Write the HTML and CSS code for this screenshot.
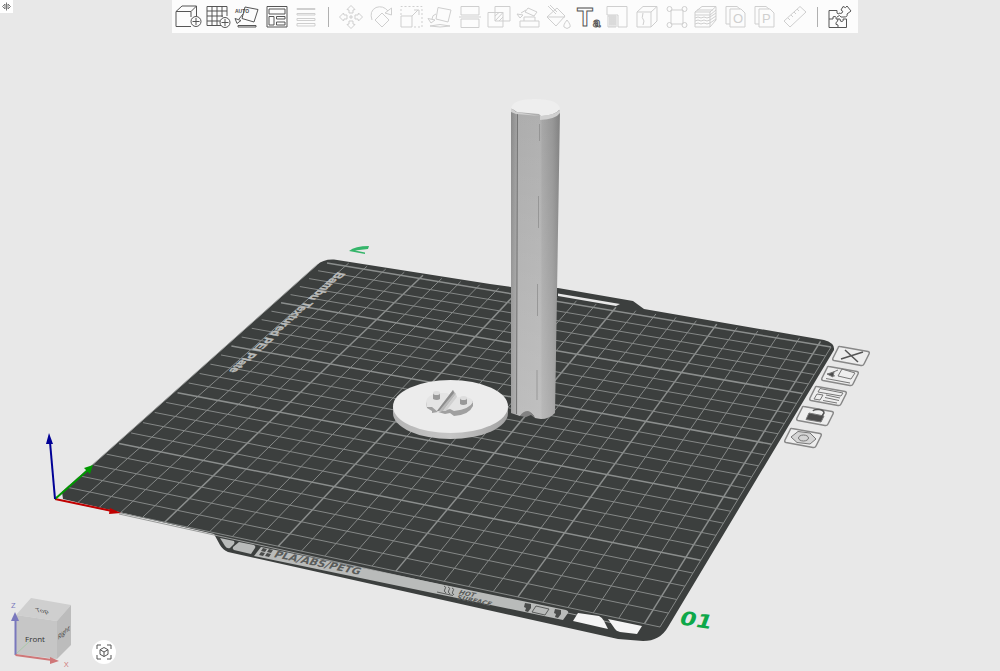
FILE: index.html
```html
<!doctype html>
<html lang="en">
<head>
<meta charset="utf-8">
<title>Prepare - Plate 01</title>
<link rel="stylesheet" href="styles.css">
</head>
<body>

<main class="stage">
	<svg class="scene" viewBox="0 0 1000 671">
		<defs>
			<linearGradient id="towerSide" x1="0" x2="1" y1="0" y2="0">
				<stop offset="0" stop-color="#8a8a8a"/>
				<stop offset="0.1" stop-color="#9c9c9c"/>
				<stop offset="0.15" stop-color="#adadad"/>
				<stop offset="0.6" stop-color="#b0b0b0"/>
				<stop offset="0.64" stop-color="#a6a6a6"/>
				<stop offset="0.85" stop-color="#969696"/>
				<stop offset="1" stop-color="#808080"/>
			</linearGradient>
			<linearGradient id="towerLight" x1="0" x2="0" y1="0" y2="1">
				<stop offset="0" stop-color="#fff" stop-opacity="0"/>
				<stop offset="1" stop-color="#fff" stop-opacity="0.2"/>
			</linearGradient>
			<linearGradient id="discSide" x1="0" x2="1" y1="0" y2="0">
				<stop offset="0" stop-color="#b5b5b5"/>
				<stop offset="0.5" stop-color="#c6c6c6"/>
				<stop offset="1" stop-color="#a2a2a2"/>
			</linearGradient>
		</defs>

		<!-- build plate -->
		<path class="plate" d="M63 499L62 492L317 265Q323 259 334 259.500L490 284L511 287L558 288L633 301L644 309L824 340Q835 343 834 350L668 627Q660 641 643 641L618 639L228 552Q223 550 220 545L214 534Z"/>
		<path class="slot" d="M558 293.500L620 304L616 306L558 296Z"/>
		<g id="grid"></g>
		<path class="rim" d="M62 492L318 264"/>
		<path class="rim" d="M119 514L640 629"/>

		<!-- front lip -->
		<path class="label" d="M220 538L234 541Q235 542 234 544L230 548Q227 549 225 546Z"/>
		<path class="label" d="M239 542L254 545Q256 546 255 548L251 554L234 550Q232 549 233 547Z"/>
		<path class="label" d="M261 547L566 610Q569 611 568 613L563 620L254 556Z"/>
		<path class="hole" d="M578 613L599 616Q603 618 604 621L608 629L573 621Z"/>
		<path class="hole" d="M608 619L642 626L637 634L620 632Q616 631 615 629Z"/>
		<path class="ink" d="M263 548l4 1-2 3-4-1zM269 549l4 1-2 3-4-1zM261 552l4 1-2 3-4-1zM267 553l4 1-2 3-4-1z"/>
		<text class="lip-text" transform="matrix(0.97 0.2 -0.5 0.8 273 557)">PLA/ABS/PETG</text>
		<path class="ink-line" d="M444 586q3 1 1 3t1 4M448 587q3 1 1 3t1 4M452 588q3 1 1 3t1 4M437 592l16 3.500"/>
		<text class="lip-small" transform="matrix(0.97 0.2 -0.5 0.8 458 594)">HOT</text>
		<text class="lip-small" transform="matrix(0.97 0.2 -0.5 0.8 456 599)">SURFACE</text>
		<path class="ink" d="M525 603l6 1 0 4-3 4-3-1 1-3-2-1zM555 609l6 1 0 4-3 4-3-1 1-3-2-1z"/>
		<path class="ink-line" d="M536 606l13 3-4 6-13-3z"/>

		<text class="plate-name" transform="matrix(-0.74 0.67 -0.97 -0.2 338 272)">Bambu Textured PEI Plate</text>
		<path class="green-mark" d="M349 251L365 254L365 252.500L355 250.500L368 249L369 246Q355 246 349 251Z"/>
		<text class="plate-number" transform="matrix(1 0.16 -0.3 0.8 678 624)">01</text>

		<!-- base disc -->
		<path fill="url(#discSide)" d="M393 406.500V413A57.500 26 0 0 0 508 413V406.500Z"/>
		<ellipse cx="450.500" cy="406.500" rx="57.500" ry="26.500" fill="#ececec"/>
		<path fill="#a0a0a0" d="M426 402L427 408L432 411V413L438 412L445 414L450 413L454 416Q469 415 473 406V401Z"/>
		<path fill="#e4e4e4" d="M426 402Q427 394 441 393L447 393L453 398Q472 395 473 402Q470 409 454 411L450 409L438 412L432 407L427 407Z"/>
		<path fill="#b9b9b9" d="M453 390L456 394L443 411L437 411Z"/>
		<path fill="#8d8d8d" d="M453 390L454 393L439 411L437 411Z"/>
		<path fill="#d0d0d0" d="M456 394L457 397L446 411H443Z"/>
		<path fill="#999" d="M433 393V399Q437 401 440 399V393ZM460 398V404Q463 406 467 404V398Z"/>
		<ellipse cx="436.500" cy="393" rx="3.500" ry="2" fill="#ddd"/>
		<ellipse cx="463.500" cy="398" rx="3.500" ry="2" fill="#ddd"/>

		<!-- tower -->
		<path id="tower" fill="url(#towerSide)" d="M511 109L560 110L555 413Q549 419 541 419L535 418Q532 411 526 412L520 416L511 413Z"/>
		<path fill="url(#towerLight)" d="M511 109L560 110L555 413Q549 419 541 419L535 418Q532 411 526 412L520 416L511 413Z"/>
		<path fill="none" stroke="#747474" d="M517.500 113L516.500 414"/>
		<path fill="none" stroke="#898989" stroke-width="0.700" d="M539.500 124V141M538.500 196V228M537.500 284V316M537 370V400"/>
		<path fill="#d0d0d0" d="M511 108L516 112L540 116Q557 115 560 109V113Q556 119 540 120V116L516 114L511 112Z"/>
		<path fill="#eee" d="M511 108Q513 99 535 99Q559 99 560 109Q556 115 541 116L539 114L517 112Z"/>
		<path fill="#828282" d="M520 416Q523 411 528 411Q532 412 535 418L531 415L526 417Z"/>

		<!-- origin axes -->
		<path stroke="#c00000" stroke-width="2" d="M55 499L112 511"/>
		<path fill="#c00000" d="M110 508L121 513L109 514Z"/>
		<path stroke="#009800" stroke-width="2" d="M55 499L88 470"/>
		<path fill="#009800" d="M84 468L93 465L90 474Z"/>
		<path stroke="#000096" stroke-width="2" d="M55 499L50 442"/>
		<path fill="#000096" d="M49 433L53 444H46Z"/>

		<!-- view cube -->
		<path fill="#cfcfcf" d="M31 598L71 605L57 621L16 615Z"/>
		<path fill="#c6c6c6" d="M16 615L57 621L57 659L15 654Z"/>
		<path fill="#bcbcbc" d="M71 605V645L57 659V621Z"/>
		<path stroke="#a9c9a9" stroke-width="1" d="M16 654L31 640"/>
		<text class="cube-text" x="25" y="642">Front</text>
		<text class="cube-small" transform="matrix(0.98 0.12 0.4 0.8 37 612)">Top</text>
		<text class="cube-small" transform="matrix(0.7 -0.6 0 1 58 640)">Right</text>
		<path stroke="#7a78bd" stroke-width="2" d="M15.500 655V620"/>
		<path fill="#7a78bd" d="M15 612L19 621H11Z"/>
		<path stroke="#cf7778" stroke-width="2" d="M15.500 655L52 660"/>
		<path fill="#cf7778" d="M50 657L59 661L50 664Z"/>
		<text class="axis-z" x="11" y="608">Z</text>
		<text class="axis-x" x="64" y="667">X</text>
	</svg>

	<!-- plate actions -->
	<button class="plate-btn remove" aria-label="Remove plate">
		<svg viewBox="0 0 40 22"><path d="M9 1.500L37 6.500Q39 7 38 9L33 19Q32 21 30 20.500L3 15.500Q1 15 2 13L7 3Q7.500 1 9 1.500Z"/><path class="thick" d="M14 5L27 17M32 7L10 14"/></svg>
	</button>
	<button class="plate-btn orient" aria-label="Auto orient plate">
		<svg viewBox="0 0 40 22"><path d="M9 1.500L37 6.500Q39 7 38 9L33 19Q32 21 30 20.500L3 15.500Q1 15 2 13L7 3Q7.500 1 9 1.500Z"/><path d="M22 4L35 8L31 14L18 11ZM6 13.500L30 18M11 8L18 5M8 9L15 11"/><path class="solid" d="M7 9L14 7L13 12Z"/></svg>
	</button>
	<button class="plate-btn arrange" aria-label="Arrange plate">
		<svg viewBox="0 0 40 22"><path d="M9 1.500L37 6.500Q39 7 38 9L33 19Q32 21 30 20.500L3 15.500Q1 15 2 13L7 3Q7.500 1 9 1.500Z"/><path d="M12 3.500L35 8L33 11L10 7ZM9 9L15 10L12 15L6 14ZM18 10L32 13M17 12.500L31 15.500M15 15.500L29 18"/></svg>
	</button>
	<button class="plate-btn lock" aria-label="Lock plate">
		<svg viewBox="0 0 40 22"><path d="M9 1.500L37 6.500Q39 7 38 9L33 19Q32 21 30 20.500L3 15.500Q1 15 2 13L7 3Q7.500 1 9 1.500Z"/><path class="solid" d="M14 8L29 11L26 17L11 14.500Z"/><path class="thick" d="M27 11L29 8Q29 5 24 4.500Q19 4 18 6"/></svg>
	</button>
	<button class="plate-btn settings" aria-label="Plate settings">
		<svg viewBox="0 0 40 22"><path d="M9 1.500L37 6.500Q39 7 38 9L33 19Q32 21 30 20.500L3 15.500Q1 15 2 13L7 3Q7.500 1 9 1.500Z"/><path class="nut" d="M15 4.500L27 6L33 12L27 17L14 15.500L8 10Z"/><ellipse cx="20.500" cy="11" rx="5" ry="3"/></svg>
	</button>

	<button class="fit-btn" aria-label="Fit camera to scene">
		<svg viewBox="0 0 24 24"><path d="M5 9V5H9M15 5H19V9M19 15V19H15M9 19H5V15M12 7.500L16 9.700V14.300L12 16.500L8 14.300V9.700ZM8 9.700L12 12L16 9.700M12 12V16.500"/></svg>
	</button>
</main>

<button class="collapse-btn" aria-label="Collapse sidebar">
	<svg viewBox="0 0 13 13"><path d="M6.500 2.500V10.500M5 4L2.500 6.500L5 9ZM8 4L10.500 6.500L8 9Z"/></svg>
</button>

<header class="topbar">
	<nav class="toolbar" aria-label="Tools">
		<button aria-label="Add"><svg viewBox="0 0 24 24"><path d="M15 21.500H0V6.500H15V12M0 6.500L6 1H20.500L15 6.500M20.500 1V11"/><circle cx="20" cy="16.500" r="5"/><path d="M16.500 16.500H23.500M20 13V20"/></svg></button>
		<button aria-label="Add plate"><svg viewBox="0 0 24 24"><path d="M15 20.500H1V1.500H21V11M1 6H21M1 11H17M1 16H14M6 1.500V20.500M11 1.500V20.500M16 1.500V12"/><circle cx="19" cy="17.500" r="5"/><path d="M15.500 17.500H22.500M19 14V21"/></svg></button>
		<button aria-label="Auto orient"><svg viewBox="0 0 24 24"><path d="M10 2L23 4.500L19 17L7 13.500ZM3 20.500H21V22H3ZM0 13.500L6 15.500L2 18.500ZM4 14L8 9"/><text class="auto-text" x="0" y="8">AUTO</text></svg></button>
		<button aria-label="Arrange all"><svg viewBox="0 0 24 24"><path d="M2 1.500H22V22H2ZM4 4H20V9H4ZM4 11.500H9V20H4ZM11.500 11.500H20V14H11.500ZM11.500 17H20V20H11.500Z"/></svg></button>
		<button class="off" disabled aria-label="Layers height"><svg viewBox="0 0 24 24"><path d="M3 3.500H21V4.500H3ZM3 8.500H21V10H3ZM3 13.500H21V15.500H3ZM3 18.500H21V21H3Z"/></svg></button>
		<span class="sep"></span>
		<button class="off" disabled aria-label="Move"><svg viewBox="0 0 24 24"><path d="M12 0.500L16 4.500L14 5V8H10V5L8 4.500ZM12 23.500L16 19.500L14 19V16H10V19L8 19.500ZM0.500 12L4.500 8L5 10H8V14H5L4.500 16ZM23.500 12L19.500 8L19 10H16V14H19L19.500 16ZM11 11H13V13H11Z"/></svg></button>
		<button class="off" disabled aria-label="Rotate"><svg viewBox="0 0 24 24"><path d="M3 15Q0 6 7 2.500Q14 0 19 6M16 8L22.500 3V10ZM13 8L20 15L13 22L6 15Z"/></svg></button>
		<button class="off" disabled aria-label="Scale"><svg viewBox="0 0 24 24"><path d="M2 11H13V22H2ZM13 11L19 5M15 5H20V10"/><path stroke-dasharray="2 2" d="M2 10V1.500H23V22H14"/></svg></button>
		<button class="off" disabled aria-label="Lay on face"><svg viewBox="0 0 24 24"><path d="M10 2.500L23 5L20 17L8 14ZM2 21Q12 18 22 21Q12 23 2 21ZM0 13.500L7 15L3 18ZM4 14Q4 10 8 9"/></svg></button>
		<button class="off" disabled aria-label="Cut"><svg viewBox="0 0 24 24"><path d="M3 1.500H21V10H3ZM3 14H21V22.500H3ZM1 12H23"/></svg></button>
		<button class="off" disabled aria-label="Mesh boolean"><svg viewBox="0 0 24 24"><path d="M8 1.500H23V16H8ZM1 7.500H16V22H1ZM8 11L12 7.500M8 16L16 7.500M12 16L16 12"/></svg></button>
		<button class="off" disabled aria-label="Supports"><svg viewBox="0 0 24 24"><path d="M3 16H22V22H3ZM7 16V12H18V16M11 3L20 7L17 11L8 7ZM0 9L6 10L3 13ZM4 8L9 5"/></svg></button>
		<button class="off" disabled aria-label="Color painting"><svg viewBox="0 0 24 24"><path d="M1 12L11 3L19 11L10 21ZM1 12H19M2 1L10 9M4 0L11 7M21 15Q17 20 18 22Q21 25 24 22Q25 20 21 15Z"/></svg></button>
		<button aria-label="Text"><svg viewBox="0 0 24 24"><text class="big-t" x="1" y="21">T</text><text class="small-a" x="17" y="22">a</text></svg></button>
		<button class="off" disabled aria-label="Seam painting"><svg viewBox="0 0 24 24"><path d="M2 1.500H22V22H13V10H2ZM3 11H11V22H3ZM4 13H11M4 15H11M4 17H11M4 19H11M5 11V22M7 11V22M9 11V22"/></svg></button>
		<button class="off" disabled aria-label="Split to parts"><svg viewBox="0 0 24 24"><path d="M2 7H16V22H2ZM2 7L8 1.500H22L16 7M22 1.500V16L16 22M8 8Q6 13 9 16L8 20"/></svg></button>
		<button class="off" disabled aria-label="Assembly"><svg viewBox="0 0 24 24"><path d="M6 5H18V19H6Z"/><circle cx="4.500" cy="4" r="2.500"/><circle cx="19.500" cy="4" r="2.500"/><circle cx="4.500" cy="20" r="2.500"/><circle cx="19.500" cy="20" r="2.500"/></svg></button>
		<button class="off" disabled aria-label="Variable layer height"><svg viewBox="0 0 24 24"><path d="M1 7H16V22H1ZM1 7L8 1.500H22L16 7M22 1.500V15L16 22M3 5H19M1 10H16L22 5M1 13L4 12L7 13L10 12L13 13L16 12L22 8M1 16L4 15L7 16L10 15L13 16L16 15L22 11M1 19L4 18L7 19L10 18L13 19L16 18L22 14"/></svg></button>
		<button class="off" disabled aria-label="Copy objects"><svg viewBox="0 0 24 24"><path d="M6 4H17L21 8V22H6ZM6 19H2V1.500H13L16 4"/><text class="doc-letter" x="9" y="18">O</text></svg></button>
		<button class="off" disabled aria-label="Copy parts"><svg viewBox="0 0 24 24"><path d="M6 4H17L21 8V22H6ZM6 19H2V1.500H13L16 4"/><text class="doc-letter" x="9" y="18">P</text></svg></button>
		<button class="off" disabled aria-label="Measure"><svg viewBox="0 0 24 24"><path d="M17 1.500L23 7L7 22L1 16ZM14 4L16 6M11 7L13 9M8 10L10 12M5 13L7 15"/></svg></button>
		<span class="sep"></span>
		<button aria-label="Assembly view"><svg viewBox="0 0 24 24"><path d="M9 5.500H1V22.500H18.500V14H15M1 14H5Q4 11 7 11.500Q9 12 8 14H10M10 22.500V20Q7 20 8 17.500Q10 17 10 14M10 14H12Q12 17 14 16.500Q16 16 15 14M9 5.500Q8 9 11 9M13 5L15 1.500Q18 4 19 1L23 6L19 9Q20 12 16 12L13 12Q12 9 9 12M13 5Q16 6 14 8Q12 9 11 8"/></svg></button>
	</nav>
</header>

<script src="grid.js"></script>
</body>
</html>
```

FILE: styles.css
```css
body {
	margin: 0;
	background: #e8e8e8;
	font-family: "Open Sans", "Noto Sans", sans-serif;
	overflow: hidden;
}

button {
	padding: 0;
	border: 0;
	background: none;
	cursor: pointer;
}

button svg {
	display: block;
	width: 100%;
	height: 100%;
	overflow: visible;
	fill: none;
	stroke: #555;
	stroke-width: 1;
}

/* Toolbar */
.topbar {
	position: relative;
	display: flex;
	justify-content: center;
	padding-left: 30px;
}

.toolbar {
	display: flex;
	justify-content: space-between;
	align-items: center;
	box-sizing: border-box;
	width: 686px;
	height: 33px;
	padding: 0 6px 0 4px;
	background: #fcfcfc;
}

.toolbar button {
	width: 24px;
	height: 24px;
}

.toolbar .off svg {
	stroke: #cfcfcf;
}

.sep {
	width: 10px;
	height: 20px;
	background: linear-gradient(#b0b0b0, #b0b0b0) center / 1px 100% no-repeat;
}

.auto-text {
	font: bold 5px "Liberation Sans", sans-serif;
	fill: #4a4a4a;
	stroke: none;
}

.big-t {
	font: bold 26px "Liberation Sans", sans-serif;
	fill: #fcfcfc;
}

.small-a {
	font: bold 13px "Liberation Sans", sans-serif;
	fill: #fcfcfc;
}

.doc-letter {
	font: 13px "Liberation Sans", sans-serif;
	fill: #cfcfcf;
	stroke: none;
}

.collapse-btn {
	position: absolute;
	z-index: 1;
	top: 0;
	left: 0;
	width: 13px;
	height: 13px;
	background: #fff;
}

.collapse-btn svg {
	stroke: #777;
}

/* 3D view */
.stage {
	position: absolute;
	top: 0;
	left: 0;
	width: 100%;
	aspect-ratio: 1000 / 671;
}

.scene {
	display: block;
	width: 100%;
}

.plate { fill: #3c3f3e; }
.slot { fill: #e8e8e8; }
.hole { fill: #f4f4f4; }
.label { fill: #b9bbba; }
.ink { fill: #4a4c4b; }

.ink-line {
	fill: none;
	stroke: #5a5c5b;
}

.rim {
	fill: none;
	stroke: #989a99;
}

.grid-line {
	stroke: #858887;
	stroke-width: 1;
}

.grid-bold {
	stroke: #8b8e8d;
	stroke-width: 1.5;
}

.lip-text {
	font: bold 11px "DejaVu Sans", sans-serif;
	fill: #5a5c5b;
}

.lip-small {
	font: bold 7px "DejaVu Sans", sans-serif;
	fill: #5a5c5b;
}

.plate-name {
	font: bold 12px "Liberation Sans", sans-serif;
	fill: #b9bbba;
	stroke: #b9bbba;
	stroke-width: 0.5;
}

.plate-number {
	font: bold 23px "DejaVu Sans", sans-serif;
	fill: #0ea84a;
}

.green-mark {
	fill: #35b56a;
}

/* View cube */
.cube-text {
	font-size: 8px;
	fill: #333;
}

.cube-small {
	font-size: 7px;
	fill: #333;
}

.axis-z {
	font-size: 8px;
	fill: #7a78bd;
}

.axis-x {
	font-size: 8px;
	fill: #cf7778;
}

/* Buttons on the 3D view */
.plate-btn {
	position: absolute;
	width: 40px;
	height: 22px;
}

.plate-btn svg {
	stroke: #777;
}

.plate-btn path:first-child {
	fill: #ededed;
	stroke: #888;
	stroke-width: 1.5;
}

.plate-btn .thick {
	stroke: #555;
	stroke-width: 1.5;
}

.plate-btn .solid {
	fill: #4a4a4a;
}

.plate-btn .nut {
	fill: #d4d4d4;
}

.remove { left: 83.1%; top: 51.4%; }
.orient { left: 82%; top: 54.4%; }
.arrange { left: 80.8%; top: 57.4%; }
.lock { left: 79.5%; top: 60.4%; }
.settings { left: 78.3%; top: 63.6%; }

.fit-btn {
	position: absolute;
	left: 9.2%;
	top: 95.4%;
	width: 24px;
	height: 24px;
	border-radius: 50%;
	background: #fff;
}
```

FILE: grid.js
```js
// maps bed millimetres to view coordinates
var W = 256;
var D = 250;
var p00 = [55, 499];
var p10 = [660, 627];
var p11 = [831, 347];
var p01 = [327, 263];

var dx1 = p10[0] - p11[0], dy1 = p10[1] - p11[1];
var dx2 = p01[0] - p11[0], dy2 = p01[1] - p11[1];
var sx = p00[0] - p10[0] + p11[0] - p01[0];
var sy = p00[1] - p10[1] + p11[1] - p01[1];
var det = dx1 * dy2 - dx2 * dy1;
var g = (sx * dy2 - dx2 * sy) / det;
var h = (dx1 * sy - sx * dy1) / det;

function project(x, y) {
	var u = x / W, v = y / D;
	var w = g * u + h * v + 1;
	return [
		((p10[0] - p00[0] + g * p10[0]) * u + (p01[0] - p00[0] + h * p01[0]) * v + p00[0]) / w,
		((p10[1] - p00[1] + g * p10[1]) * u + (p01[1] - p00[1] + h * p01[1]) * v + p00[1]) / w
	];
}

function addLine(x1, y1, x2, y2, bold) {
	var a = project(x1, y1), b = project(x2, y2);
	var line = document.createElementNS("http://www.w3.org/2000/svg", "line");
	line.setAttribute("x1", a[0]);
	line.setAttribute("y1", a[1]);
	line.setAttribute("x2", b[0]);
	line.setAttribute("y2", b[1]);
	line.setAttribute("class", bold ? "grid-bold" : "grid-line");
	document.getElementById("grid").appendChild(line);
}

for (var x = 10; x <= 250; x += 10) {
	addLine(x, 0, x, 254, x % 50 == 0);
}
for (var y = 10; y <= 250; y += 10) {
	addLine(0, y, W, y, y % 50 == 0);
}
addLine(W, 0, W, D, false);
addLine(12, 0, W, 0, false);
```
